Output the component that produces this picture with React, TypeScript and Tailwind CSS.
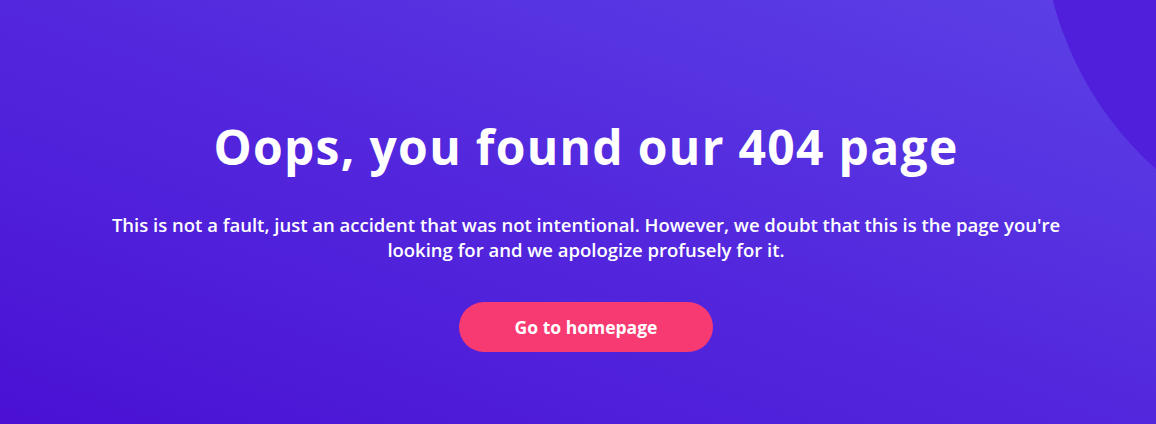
import { useMemo } from "react";

const content = {
  title: "Oops, you found our 404 page",
  body:
    "This is not a fault, just an accident that was not intentional. However, we doubt that this is the page you're looking for and we apologize profusely for it.",
  cta: "Go to homepage",
};

export default function App() {
  const year = useMemo(() => new Date().getFullYear(), []);

  return (
    <main
      data-year={year}
      className="relative h-[424px] w-full overflow-hidden bg-gradient-to-tr from-[#4a10d4] via-[#5327dd] to-[#5c40e6] font-['Open_Sans',sans-serif] text-white"
    >
      {/* decorative blob in the top-right corner */}
      <div className="pointer-events-none absolute left-[1042px] top-[-425px] h-[680px] w-[680px] rounded-full bg-[#4f1fdc]" />

      <section className="relative flex flex-col items-center pl-[32px] pr-[16px] pt-[119px] text-center">
        <h1 className="text-[48px] font-bold leading-[56px] tracking-[1.3px]">
          {content.title}
        </h1>
        <p className="mt-[37px] max-w-[960px] text-[18.5px] font-semibold leading-[25px]">
          {content.body}
        </p>
        <a
          href="#"
          className="mt-[40px] flex h-[50px] w-[254px] items-center justify-center rounded-full bg-[#f83a72] text-[17.5px] font-bold"
        >
          {content.cta}
        </a>
      </section>
    </main>
  );
}
